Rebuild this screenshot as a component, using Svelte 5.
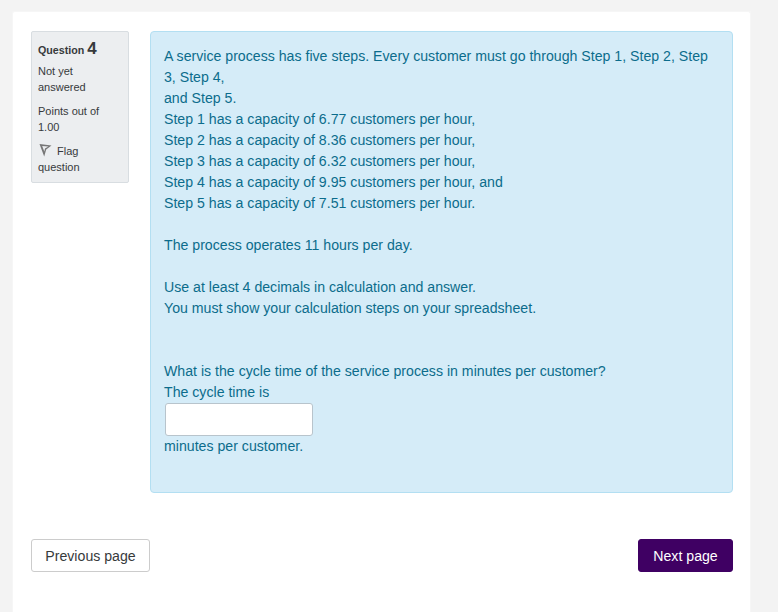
<script>
    const stepLines = [
        'Step 1 has a capacity of 6.77 customers per hour,',
        'Step 2 has a capacity of 8.36 customers per hour,',
        'Step 3 has a capacity of 6.32 customers per hour,',
        'Step 4 has a capacity of 9.95 customers per hour, and',
        'Step 5 has a capacity of 7.51 customers per hour.'
    ];
</script>

<div class="page">
    <div class="card">
        <div class="question">
            <div class="info">
                <h3 class="qno">Question <span>4</span></h3>
                <div class="state">Not yet answered</div>
                <div class="grade">Points out of 1.00</div>
                <div class="flag">
                    <svg class="flag-icon" width="13" height="14" viewBox="0 0 13 14">
                        <path d="M0.5 1 L12.5 2.4 L7.2 6.6 L5.2 13.5 Z M3.2 2.9 L5.3 8.6 L6 5.6 L9.4 3.4 Z" fill="#777" fill-rule="evenodd" />
                    </svg>
                    Flag question
                </div>
            </div>
            <div class="content">
                <p>A service process has five steps. Every customer must go through Step 1, Step 2, Step 3, Step 4,<br />and Step 5.</p>
                {#each stepLines as line}
                    <p>{line}</p>
                {/each}
                <p class="gap">The process operates 11 hours per day.</p>
                <p class="gap">Use at least 4 decimals in calculation and answer.</p>
                <p>You must show your calculation steps on your spreadsheet.</p>
                <p class="gap2">What is the cycle time of the service process in minutes per customer?</p>
                <p>The cycle time is</p>
                <input type="text" />
                <p>minutes per customer.</p>
            </div>
        </div>
        <div class="actions">
            <button class="prev">Previous page</button>
            <button class="next">Next page</button>
        </div>
    </div>
</div>

<style>
    :global(body) {
        margin: 0;
        background: #f3f3f3;
    }
    .page {
        height: 612px;
        overflow: hidden;
        padding: 11px 27px 0 12px;
        box-sizing: border-box;
        font-family: "Liberation Sans", Arial, sans-serif;
    }
    .card {
        background: #fff;
        border: 1px solid #f6f6f6;
        border-bottom: none;
        border-radius: 3px 3px 0 0;
        height: 601px;
        box-sizing: border-box;
        padding: 19px 17px 0 18px;
    }
    .question {
        display: flex;
        align-items: flex-start;
        gap: 21px;
    }
    .info {
        width: 98px;
        height: 152px;
        box-sizing: border-box;
        flex: none;
        background: #eceef0;
        border: 1px solid #d8dde1;
        border-radius: 2px;
        padding: 7px 18px 0 6px;
        font-size: 11px;
        line-height: 16px;
        color: #373a3c;
    }
    .qno {
        margin: 0 0 3px;
        font-size: 10.7px;
        line-height: 20px;
        font-weight: bold;
        white-space: nowrap;
    }
    .qno span {
        font-size: 17px;
    }
    .state {
        margin-bottom: 8px;
    }
    .grade {
        margin-bottom: 8px;
    }
    .flag-icon {
        vertical-align: -2px;
        margin: 0 2px 0 1px;
    }
    .content {
        flex: 1;
        height: 462px;
        box-sizing: border-box;
        background: #d5ecf8;
        border: 1px solid #b3dff2;
        border-radius: 4px;
        padding: 14px 13px 0;
        font-size: 14.15px;
        line-height: 21px;
        color: #0c6c8c;
    }
    .content p {
        margin: 0;
    }
    .content .gap {
        margin-top: 21px;
    }
    .content .gap2 {
        margin-top: 42px;
    }
    input {
        display: block;
        width: 148px;
        height: 33px;
        box-sizing: border-box;
        margin: 0 0 1px 1px;
        background: #fff;
        border: 1px solid #b8c4cc;
        border-radius: 3px;
        padding: 0;
    }
    .content p:last-child {
        margin-top: -1px;
    }
    .actions {
        display: flex;
        justify-content: space-between;
        margin-top: 46px;
    }
    button {
        height: 33px;
        box-sizing: border-box;
        border-radius: 3px;
        font-family: inherit;
        font-size: 14.15px;
        padding: 0;
    }
    .prev {
        width: 119px;
        background: #fff;
        border: 1px solid #cccccc;
        color: #373a3c;
    }
    .next {
        width: 95px;
        background: #3f0063;
        border: 1px solid #3f0063;
        color: #fff;
    }
</style>
